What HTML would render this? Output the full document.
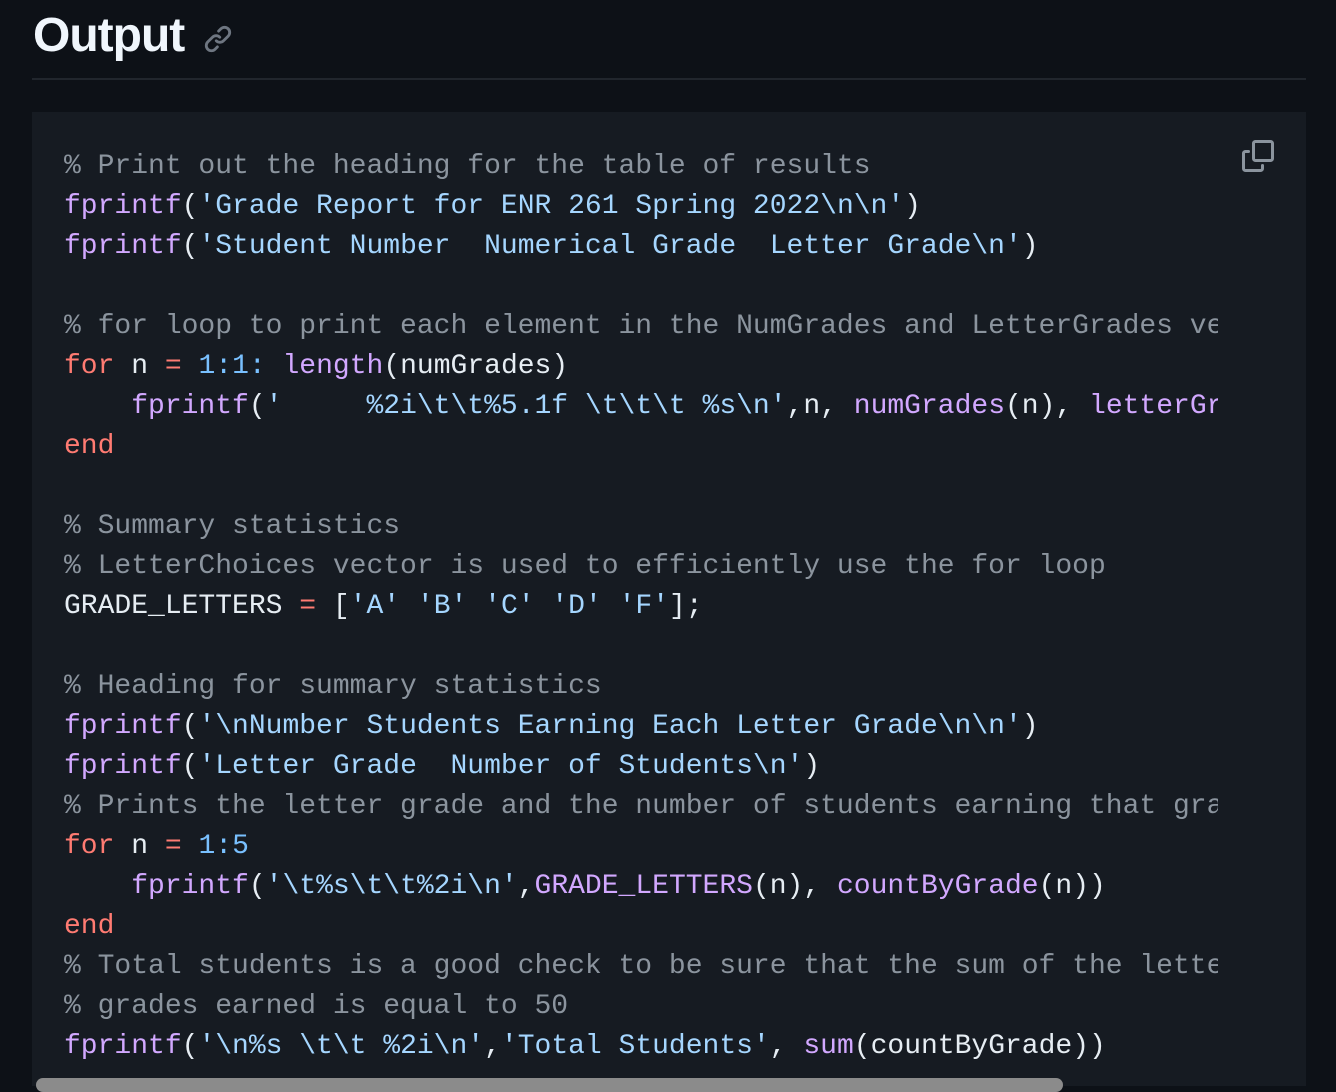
<!DOCTYPE html>
<html><head><meta charset="utf-8"><style>
html,body{margin:0;padding:0;background:#0d1117;width:1336px;height:1086px;overflow:hidden}
h2{position:absolute;left:33px;top:8px;margin:0;font:bold 48px "Liberation Sans",sans-serif;color:#f0f6fc;letter-spacing:-1px}
.link{position:absolute;left:203px;top:24px}
.rule{position:absolute;left:32px;top:78px;width:1274px;height:2px;background:#21262d}
.box{position:absolute;left:32px;top:112px;width:1274px;height:974px;background:#161b22;overflow:hidden}
pre{position:absolute;left:32px;top:35px;width:1154px;margin:0;overflow:hidden;font:28px/40px "Liberation Mono",monospace;color:#e6edf3;white-space:pre}
.c{color:#8b949e}.f{color:#d2a8ff}.s{color:#a5d6ff}.k{color:#ff7b72}.n{color:#79c0ff}
.copy{position:absolute;left:1242px;top:140px}
.sb{position:absolute;left:36px;top:1078px;width:1027px;height:14px;border-radius:7px;background:#8b8b8b}
</style></head><body>
<h2>Output</h2>
<svg class="link" width="30" height="30" viewBox="0 0 16 16" fill="#6e7681"><path d="m7.775 3.275 1.25-1.25a3.5 3.5 0 1 1 4.95 4.950l-2.5 2.5a3.5 3.5 0 0 1-4.95 0 .751.751 0 0 1 .018-1.042.751.751 0 0 1 1.042-.018 1.998 1.998 0 0 0 2.830 0l2.5-2.5a2.002 2.002 0 0 0-2.830-2.830l-1.25 1.25a.751.751 0 0 1-1.042-.018.751.751 0 0 1-.018-1.042Zm-4.69 9.64a1.998 1.998 0 0 0 2.830 0l1.25-1.25a.751.751 0 0 1 1.042.018.751.751 0 0 1 .018 1.042l-1.25 1.25a3.5 3.5 0 1 1-4.95-4.95l2.5-2.5a3.5 3.5 0 0 1 4.95 0 .751.751 0 0 1-.018 1.042.751.751 0 0 1-1.042.018 1.998 1.998 0 0 0-2.830 0l-2.5 2.5a1.998 1.998 0 0 0 0 2.830Z"/></svg>
<div class="rule"></div>
<div class="box"><pre><span class="c">% Print out the heading for the table of results</span>
<span class="f">fprintf</span>(<span class="s">'Grade Report for ENR 261 Spring 2022\n\n'</span>)
<span class="f">fprintf</span>(<span class="s">'Student Number  Numerical Grade  Letter Grade\n'</span>)

<span class="c">% for loop to print each element in the NumGrades and LetterGrades vectors</span>
<span class="k">for</span> n <span class="k">=</span> <span class="n">1:1:</span> <span class="f">length</span>(numGrades)
    <span class="f">fprintf</span>(<span class="s">'     %2i\t\t%5.1f \t\t\t %s\n'</span>,n, <span class="f">numGrades</span>(n), <span class="f">letterGrades</span>(n))
<span class="k">end</span>

<span class="c">% Summary statistics</span>
<span class="c">% LetterChoices vector is used to efficiently use the for loop</span>
GRADE_LETTERS <span class="k">=</span> [<span class="s">'A'</span> <span class="s">'B'</span> <span class="s">'C'</span> <span class="s">'D'</span> <span class="s">'F'</span>];

<span class="c">% Heading for summary statistics</span>
<span class="f">fprintf</span>(<span class="s">'\nNumber Students Earning Each Letter Grade\n\n'</span>)
<span class="f">fprintf</span>(<span class="s">'Letter Grade  Number of Students\n'</span>)
<span class="c">% Prints the letter grade and the number of students earning that grade</span>
<span class="k">for</span> n <span class="k">=</span> <span class="n">1:5</span>
    <span class="f">fprintf</span>(<span class="s">'\t%s\t\t%2i\n'</span>,<span class="f">GRADE_LETTERS</span>(n), <span class="f">countByGrade</span>(n))
<span class="k">end</span>
<span class="c">% Total students is a good check to be sure that the sum of the letter</span>
<span class="c">% grades earned is equal to 50</span>
<span class="f">fprintf</span>(<span class="s">'\n%s \t\t %2i\n'</span>,<span class="s">'Total Students'</span>, <span class="f">sum</span>(countByGrade))</pre></div>
<svg class="copy" width="32" height="32" viewBox="0 0 16 16" fill="#8b949e"><path d="M0 6.75C0 5.784.784 5 1.75 5h1.5a.75.75 0 0 1 0 1.5h-1.5a.25.25 0 0 0-.25.25v7.5c0 .138.112.25.25.25h7.5a.25.25 0 0 0 .25-.25v-1.5a.75.75 0 0 1 1.5 0v1.5A1.75 1.75 0 0 1 9.25 16h-7.5A1.75 1.75 0 0 1 0 14.25Z"/><path d="M5 1.75C5 .784 5.784 0 6.750 0h7.5C15.216 0 16 .784 16 1.75v7.5A1.75 1.75 0 0 1 14.25 11h-7.5A1.75 1.75 0 0 1 5 9.25Zm1.75-.25a.25.25 0 0 0-.25.25v7.5c0 .138.112.25.25.25h7.5a.25.25 0 0 0 .25-.25v-7.5a.25.25 0 0 0-.25-.25Z"/></svg>
<div class="sb"></div>
</body></html>
